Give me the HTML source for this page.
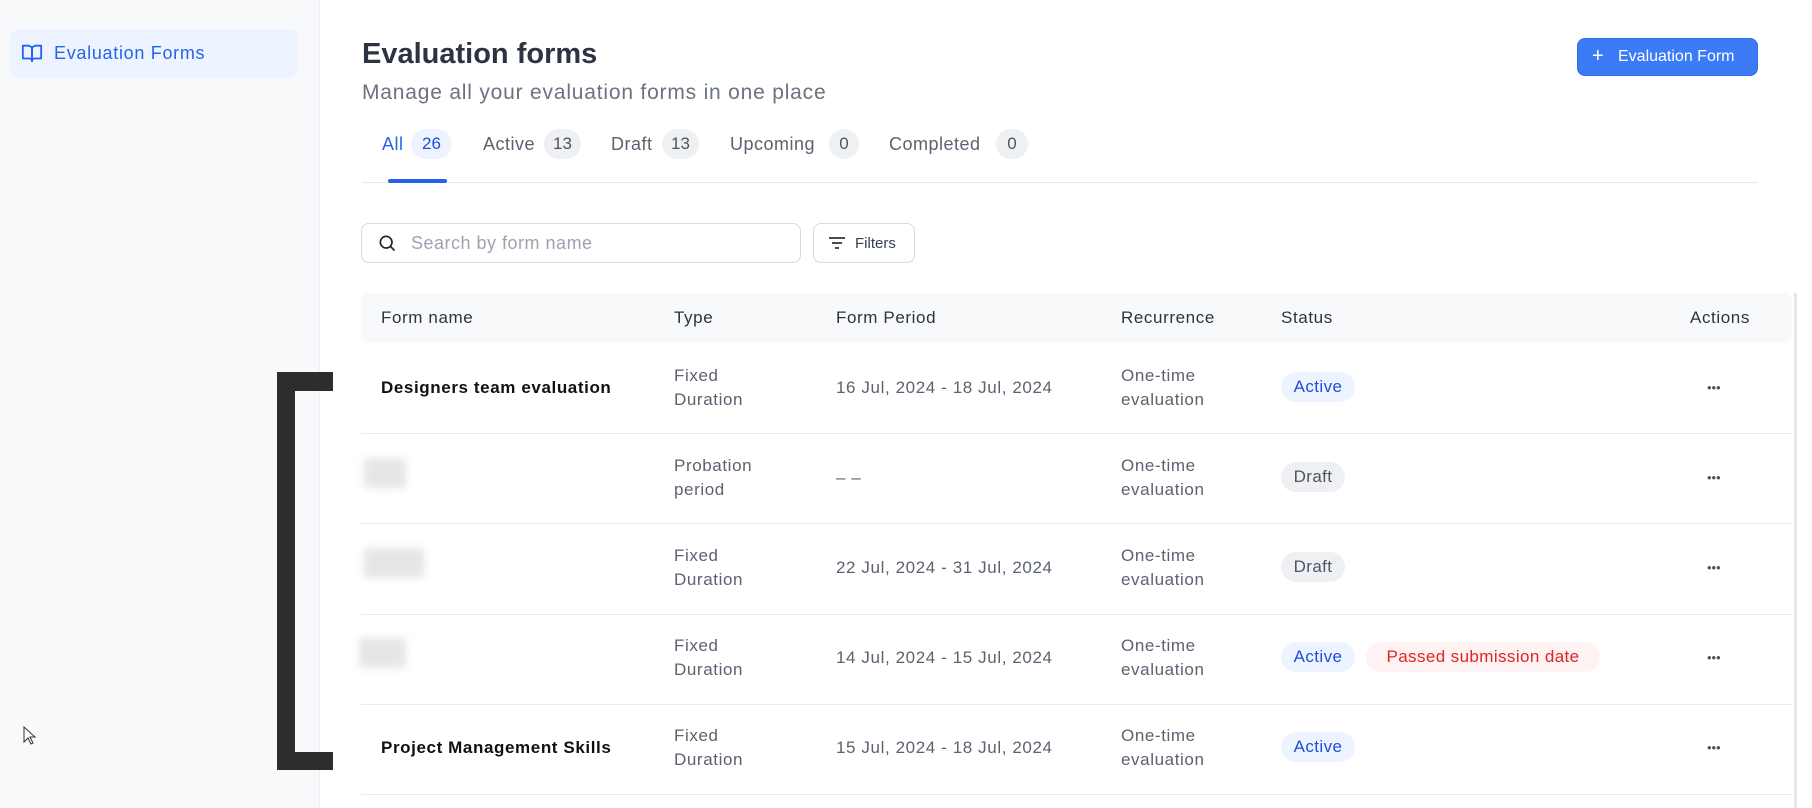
<!DOCTYPE html>
<html><head><meta charset="utf-8"><style>
*{box-sizing:border-box;margin:0;padding:0}
body{width:1812px;height:808px;overflow:hidden;background:#fff;font-family:"Liberation Sans",sans-serif;position:relative;color:#4b5563}
.a{position:absolute;white-space:nowrap}
.side{left:0;top:0;width:320px;height:808px;background:#f8f9fb;border-right:1px solid #eceef2}
.nav{left:10px;top:29px;width:288px;height:49px;background:#eef4ff;border-radius:9px}
.tab{font-size:18px;color:#5b6270;top:134px;letter-spacing:0.5px}
.bd{top:129px;height:30px;border-radius:15px;background:#eef0f4;font-size:17px;color:#4b5563;text-align:center;line-height:30px}
.th{top:308px;font-size:17px;color:#2d3340;letter-spacing:0.6px}
.td{font-size:17px;color:#5b6270;line-height:24px;letter-spacing:0.6px}
.nm{font-size:17px;color:#111;font-weight:bold;letter-spacing:0.6px}
.line{left:361px;width:1431px;height:1px;background:#e8eaee}
.pill{height:30px;border-radius:15px;line-height:30px;font-size:17px;text-align:center;letter-spacing:0.4px}
.act{background:#eef4ff;color:#1d4ed8;width:74px}
.dr{background:#eef0f4;color:#4b5563;width:64px}
.dots{font-size:13px;color:#4b5563;letter-spacing:0px}
.blur{background:#e6e6e6;filter:blur(4px)}
</style></head><body>
<div class="a side"></div>
<div class="a nav"></div>
<svg class="a" style="left:21px;top:42px" width="22" height="22" viewBox="0 0 24 24" fill="none" stroke="#2563eb" stroke-width="2" stroke-linecap="round" stroke-linejoin="round"><path d="M2 4h6a4 4 0 0 1 4 4v13a3 3 0 0 0-3-3H2z"/><path d="M22 4h-6a4 4 0 0 0-4 4v13a3 3 0 0 1 3-3h7z"/></svg>
<div class="a" style="left:54px;top:43px;font-size:18px;color:#2563eb;letter-spacing:0.7px">Evaluation Forms</div>

<div class="a" style="left:362px;top:38px;font-size:29px;font-weight:bold;color:#2d3340">Evaluation forms</div>
<div class="a" style="left:362px;top:81px;font-size:21px;color:#6b7280;letter-spacing:0.8px">Manage all your evaluation forms in one place</div>

<div class="a" style="left:1577px;top:38px;width:181px;height:38px;background:#3b7bf6;border-radius:8px;border:1px solid #2f6ae8"></div>
<div class="a" style="left:1592px;top:45px;color:#fff;font-size:20px">+</div>
<div class="a" style="left:1618px;top:48px;color:#fff;font-size:16px">Evaluation Form</div>

<div class="a tab" style="left:382px;color:#2563eb">All</div>
<div class="a bd" style="left:411px;width:41px;background:#eef4ff;color:#1d4ed8">26</div>
<div class="a tab" style="left:483px">Active</div>
<div class="a bd" style="left:544px;width:37px">13</div>
<div class="a tab" style="left:611px">Draft</div>
<div class="a bd" style="left:662px;width:37px">13</div>
<div class="a tab" style="left:730px">Upcoming</div>
<div class="a bd" style="left:829px;width:30px">0</div>
<div class="a tab" style="left:889px">Completed</div>
<div class="a bd" style="left:996px;width:32px">0</div>
<div class="a" style="left:362px;top:182px;width:1396px;height:1px;background:#e5e7eb"></div>
<div class="a" style="left:388px;top:179px;width:59px;height:4px;background:#2563eb;border-radius:2px"></div>

<div class="a" style="left:361px;top:223px;width:440px;height:40px;border:1px solid #d6d9de;border-radius:8px"></div>
<svg class="a" style="left:377px;top:233px" width="20" height="20" viewBox="0 0 24 24" fill="none" stroke="#222" stroke-width="2"><circle cx="11" cy="11" r="7"/><path d="M16 16l5 5"/></svg>
<div class="a" style="left:411px;top:233px;font-size:18px;color:#9ca3af;letter-spacing:0.5px">Search by form name</div>
<div class="a" style="left:813px;top:223px;width:102px;height:40px;border:1px solid #d6d9de;border-radius:8px"></div>
<svg class="a" style="left:828px;top:235px" width="18" height="16" viewBox="0 0 18 16" stroke="#333" stroke-width="1.8"><path d="M1 3h16M4 8h10M7 13h4"/></svg>
<div class="a" style="left:855px;top:235px;font-size:15px;color:#374151">Filters</div>

<div class="a" style="left:361px;top:293px;width:1431px;height:50px;background:#f8f9fb;border-radius:8px"></div>
<div class="a" style="left:1794px;top:293px;width:3px;height:515px;background:#e5e7eb"></div>
<div class="a th" style="left:381px">Form name</div>
<div class="a th" style="left:674px">Type</div>
<div class="a th" style="left:836px">Form Period</div>
<div class="a th" style="left:1121px">Recurrence</div>
<div class="a th" style="left:1281px">Status</div>
<div class="a th" style="left:1690px">Actions</div>

<div class="a line" style="top:433px"></div>
<div class="a line" style="top:523px"></div>
<div class="a line" style="top:614px"></div>
<div class="a line" style="top:704px"></div>
<div class="a line" style="top:794px"></div>

<!-- row1 -->
<div class="a nm" style="left:381px;top:378px">Designers team evaluation</div>
<div class="a td" style="left:674px;top:364px">Fixed<br>Duration</div>
<div class="a td" style="left:836px;top:376px">16 Jul, 2024 - 18 Jul, 2024</div>
<div class="a td" style="left:1121px;top:364px">One-time<br>evaluation</div>
<div class="a pill act" style="left:1281px;top:372px">Active</div>
<div class="a dots" style="left:1707px;top:380px">•••</div>
<!-- row2 -->
<div class="a blur" style="left:364px;top:458px;width:42px;height:30px"></div>
<div class="a td" style="left:674px;top:454px">Probation<br>period</div>
<div class="a td" style="left:836px;top:466px">– –</div>
<div class="a td" style="left:1121px;top:454px">One-time<br>evaluation</div>
<div class="a pill dr" style="left:1281px;top:462px">Draft</div>
<div class="a dots" style="left:1707px;top:470px">•••</div>
<!-- row3 -->
<div class="a blur" style="left:364px;top:548px;width:60px;height:30px"></div>
<div class="a td" style="left:674px;top:544px">Fixed<br>Duration</div>
<div class="a td" style="left:836px;top:556px">22 Jul, 2024 - 31 Jul, 2024</div>
<div class="a td" style="left:1121px;top:544px">One-time<br>evaluation</div>
<div class="a pill dr" style="left:1281px;top:552px">Draft</div>
<div class="a dots" style="left:1707px;top:560px">•••</div>
<!-- row4 -->
<div class="a blur" style="left:359px;top:638px;width:47px;height:30px"></div>
<div class="a td" style="left:674px;top:634px">Fixed<br>Duration</div>
<div class="a td" style="left:836px;top:646px">14 Jul, 2024 - 15 Jul, 2024</div>
<div class="a td" style="left:1121px;top:634px">One-time<br>evaluation</div>
<div class="a pill act" style="left:1281px;top:642px">Active</div>
<div class="a pill" style="left:1366px;top:642px;width:234px;background:#fef2f2;color:#dc2626">Passed submission date</div>
<div class="a dots" style="left:1707px;top:650px">•••</div>
<!-- row5 -->
<div class="a nm" style="left:381px;top:738px">Project Management Skills</div>
<div class="a td" style="left:674px;top:724px">Fixed<br>Duration</div>
<div class="a td" style="left:836px;top:736px">15 Jul, 2024 - 18 Jul, 2024</div>
<div class="a td" style="left:1121px;top:724px">One-time<br>evaluation</div>
<div class="a pill act" style="left:1281px;top:732px">Active</div>
<div class="a dots" style="left:1707px;top:740px">•••</div>

<!-- bracket -->
<div class="a" style="left:277px;top:372px;width:18px;height:398px;background:#2d2d2d"></div>
<div class="a" style="left:277px;top:372px;width:56px;height:19px;background:#2d2d2d"></div>
<div class="a" style="left:277px;top:752px;width:56px;height:18px;background:#2d2d2d"></div>

<svg class="a" style="left:23px;top:726px" width="14" height="20" viewBox="0 0 14 20"><path d="M1 1v15l4-4 3 6 2-1-3-6h5z" fill="#fff" stroke="#333" stroke-width="1"/></svg>
</body></html>
